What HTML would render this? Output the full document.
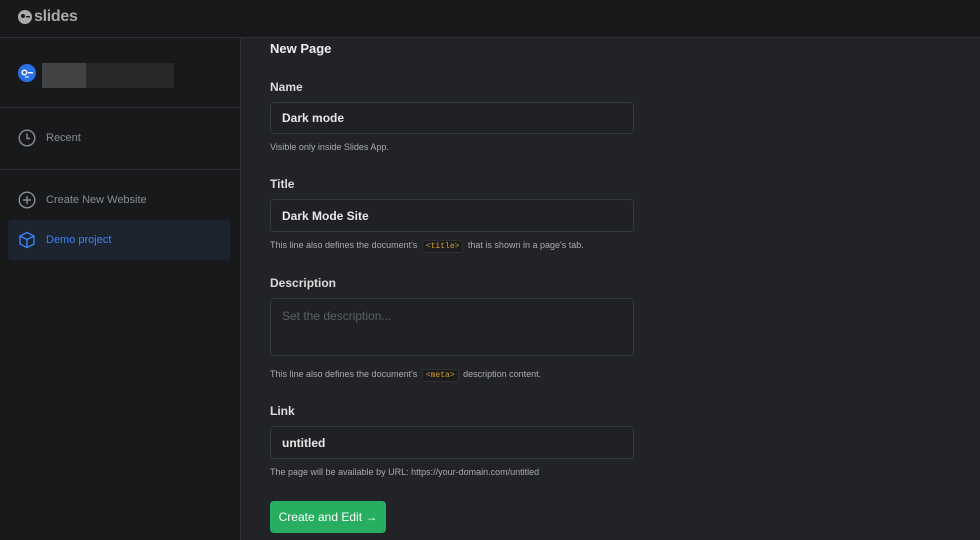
<!DOCTYPE html>
<html><head><style>
*{box-sizing:border-box;margin:0;padding:0}
body{width:980px;height:540px;overflow:hidden;background:#212326;font-family:"Liberation Sans",sans-serif;position:relative;color:#e6e6e6}
.top{position:absolute;left:0;top:0;width:980px;height:38px;background:#18191b;border-bottom:1px solid #2f3134}
.side{position:absolute;left:0;top:38px;width:241px;height:502px;background:#18191b;border-right:1px solid #2f3134}
.hr{position:absolute;left:0;width:240px;height:1px;background:#2f3134}
.item{position:absolute;left:18px;font-size:11px;color:#8a8d91;display:flex;align-items:center}
.item span{margin-left:10px}
.lbl{position:absolute;left:270px;font-size:12px;font-weight:bold;color:#dcdcdc}
.inp{position:absolute;left:270px;width:364px;border:1px solid #35383c;border-radius:4px;background:#1f2124;font-size:12px;font-weight:bold;color:#e8e8e8;padding-left:11px;display:flex;align-items:center}
.hint{position:absolute;left:270px;font-size:9px;color:#a9abae}
code{font-family:"Liberation Mono",monospace;font-size:8px;color:#d4a030;background:#1a1c1e;border:1px solid #2e3033;border-radius:3px;padding:1px 3px;margin:0 2px}
</style></head><body>
<div class="top">
<svg style="position:absolute;left:18px;top:10px" width="14" height="14" viewBox="0 0 14 14"><circle cx="7" cy="7" r="7" fill="#aaa"/><circle cx="5" cy="6" r="2" fill="#18191b"/><rect x="8" y="6" width="4" height="1.5" fill="#18191b"/></svg>
<div style="position:absolute;left:34px;top:8px;font-size:16px;font-weight:bold;color:#a8a8a8;letter-spacing:-0.3px">slides</div>
</div>
<div class="side">
<svg style="position:absolute;left:18px;top:26px" width="18" height="18" viewBox="0 0 18 18"><circle cx="9" cy="9" r="9" fill="#2b6fe6"/><circle cx="6.5" cy="8.5" r="2.3" fill="none" stroke="#fff" stroke-width="1.4"/><rect x="10" y="8" width="5" height="1.4" fill="#fff"/><rect x="7" y="12.5" width="4" height="1" fill="#fff"/></svg>
<div style="position:absolute;left:42px;top:25px;width:44px;height:25px;background:#424345"></div>
<div style="position:absolute;left:86px;top:25px;width:88px;height:25px;background:#27282a"></div>
<div class="hr" style="top:69px"></div>
<div class="item" style="top:91px"><svg width="18" height="18" viewBox="0 0 18 18"><circle cx="9" cy="9" r="7.8" fill="none" stroke="#8a8d91" stroke-width="1.4"/><path d="M9 4.5V9.5H12" fill="none" stroke="#8a8d91" stroke-width="1.4"/></svg><span>Recent</span></div>
<div class="hr" style="top:131px"></div>
<div class="item" style="top:153px"><svg width="18" height="18" viewBox="0 0 18 18"><circle cx="9" cy="9" r="7.8" fill="none" stroke="#8a8d91" stroke-width="1.4"/><path d="M9 5V13M5 9H13" stroke="#8a8d91" stroke-width="1.4"/></svg><span>Create New Website</span></div>
<div style="position:absolute;left:8px;top:182px;width:222px;height:40px;background:#1c2430;border-radius:4px"></div>
<div class="item" style="top:193px;color:#3b82f6"><svg width="18" height="18" viewBox="0 0 18 18"><path d="M9 1.5L16 5V13L9 16.5L2 13V5Z M2 5L9 8.5L16 5 M9 8.5V16.5" fill="none" stroke="#3b82f6" stroke-width="1.4" stroke-linejoin="round"/></svg><span>Demo project</span></div>
</div>
<div style="position:absolute;left:270px;top:41px;font-size:13px;font-weight:bold;color:#eee">New Page</div>
<div class="lbl" style="top:80px">Name</div>
<div class="inp" style="top:102px;height:32px">Dark mode</div>
<div class="hint" style="top:142px">Visible only inside Slides App.</div>
<div class="lbl" style="top:177px">Title</div>
<div class="inp" style="top:199px;height:33px">Dark Mode Site</div>
<div class="hint" style="top:240px">This line also defines the document's <code>&lt;title&gt;</code> that is shown in a page's tab.</div>
<div class="lbl" style="top:276px">Description</div>
<div class="inp" style="top:298px;height:58px;align-items:flex-start;padding-top:10px;font-weight:normal;color:#5c5f63">Set the description...</div>
<div class="hint" style="top:369px">This line also defines the document's <code>&lt;meta&gt;</code> description content.</div>
<div class="lbl" style="top:404px">Link</div>
<div class="inp" style="top:426px;height:33px">untitled</div>
<div class="hint" style="top:467px">The page will be available by URL: https://your-domain.com/untitled</div>
<div style="position:absolute;left:270px;top:501px;width:116px;height:32px;background:#27ae60;border-radius:4px;color:#fff;font-size:12px;display:flex;align-items:center;justify-content:center">Create and Edit →</div>
</body></html>
